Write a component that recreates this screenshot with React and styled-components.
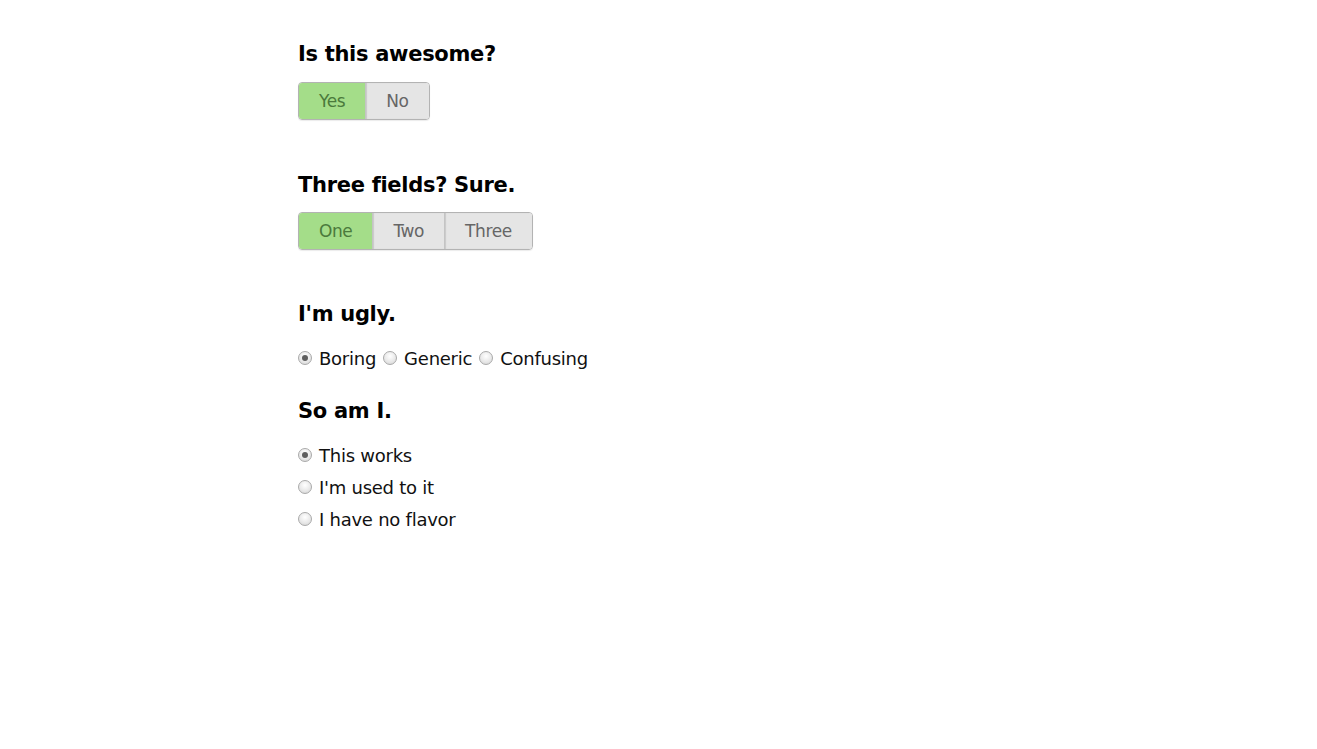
import React, { useState } from "react";
import styled, { createGlobalStyle } from "styled-components";

const GlobalStyle = createGlobalStyle`
  body {
    margin: 0;
    background: #fff;
    font-family: "DejaVu Sans", Tahoma, sans-serif;
    color: #111;
  }
`;

const Page = styled.div`
  width: 721px;
  margin: 0 auto;
  padding-top: 40px;
`;

const Section = styled.section`
  margin-bottom: ${(p) => p.$gap || 0}px;
`;

const Title = styled.h2`
  font-size: 21px;
  font-weight: bold;
  line-height: 28px;
  margin: 0 0 ${(p) => p.$space || 14}px;
  letter-spacing: -0.3px;
  color: #000;
`;

const Toggle = styled.div`
  display: inline-flex;
  border: 1px solid #b3b3b3;
  border-radius: 4px;
  overflow: hidden;
  box-shadow: 0 1px 1px rgba(0, 0, 0, 0.08);
`;

const ToggleOption = styled.button`
  font-family: "DejaVu Sans", Tahoma, sans-serif;
  font-size: 17px;
  letter-spacing: -0.4px;
  height: 36px;
  padding: 0 20px;
  border: none;
  border-left: 1px solid #c4c4c4;
  margin: 0;
  cursor: pointer;
  background: ${(p) => (p.$active ? "#a4dd89" : "#e5e5e5")};
  color: ${(p) => (p.$active ? "#4b7a3c" : "#666")};
  box-shadow: ${(p) =>
    p.$active ? "none" : "inset 1px 0 1px rgba(0, 0, 0, 0.12)"};
  &:first-child {
    border-left: none;
  }
`;

const InlineRadios = styled.div`
  display: flex;
  align-items: center;
  gap: 7px;
`;

const StackRadios = styled.div`
  display: flex;
  flex-direction: column;
  gap: 8px;
`;

const RadioLabel = styled.label`
  display: inline-flex;
  align-items: center;
  gap: 6px;
  font-size: 18px;
  line-height: 24px;
  letter-spacing: -0.25px;
  color: #111;
  cursor: pointer;
`;

const RadioInput = styled.input.attrs({ type: "radio" })`
  appearance: none;
  -webkit-appearance: none;
  width: 14px;
  height: 14px;
  margin: 0 1px 2px 0;
  border-radius: 50%;
  border: 1px solid #a9a9a9;
  background: radial-gradient(circle at 50% 35%, #ffffff 0%, #e9e9e9 55%, #d2d2d2 100%);
  position: relative;
  cursor: pointer;
  &:checked::after {
    content: "";
    position: absolute;
    left: 3px;
    top: 3px;
    width: 6px;
    height: 6px;
    border-radius: 50%;
    background: #5d5d5d;
  }
`;

function ToggleGroup({ options, value, onChange }) {
  return (
    <Toggle>
      {options.map((opt) => (
        <ToggleOption
          key={opt}
          $active={value === opt}
          onClick={() => onChange(opt)}
        >
          {opt}
        </ToggleOption>
      ))}
    </Toggle>
  );
}

function RadioSet({ name, options, value, onChange, Layout }) {
  return (
    <Layout>
      {options.map((opt) => (
        <RadioLabel key={opt}>
          <RadioInput
            name={name}
            checked={value === opt}
            onChange={() => onChange(opt)}
          />
          {opt}
        </RadioLabel>
      ))}
    </Layout>
  );
}

export default function App() {
  const [awesome, setAwesome] = useState("Yes");
  const [fields, setFields] = useState("One");
  const [ugly, setUgly] = useState("Boring");
  const [me, setMe] = useState("This works");

  return (
    <>
      <GlobalStyle />
      <Page>
        <Section $gap={51}>
          <Title>Is this awesome?</Title>
          <ToggleGroup options={["Yes", "No"]} value={awesome} onChange={setAwesome} />
        </Section>
        <Section $gap={50}>
          <Title $space={13}>Three fields? Sure.</Title>
          <ToggleGroup
            options={["One", "Two", "Three"]}
            value={fields}
            onChange={setFields}
          />
        </Section>
        <Section $gap={26}>
          <Title $space={19}>I'm ugly.</Title>
          <RadioSet
            name="ugly"
            options={["Boring", "Generic", "Confusing"]}
            value={ugly}
            onChange={setUgly}
            Layout={InlineRadios}
          />
        </Section>
        <Section>
          <Title $space={19}>So am I.</Title>
          <RadioSet
            name="me"
            options={["This works", "I'm used to it", "I have no flavor"]}
            value={me}
            onChange={setMe}
            Layout={StackRadios}
          />
        </Section>
      </Page>
    </>
  );
}
